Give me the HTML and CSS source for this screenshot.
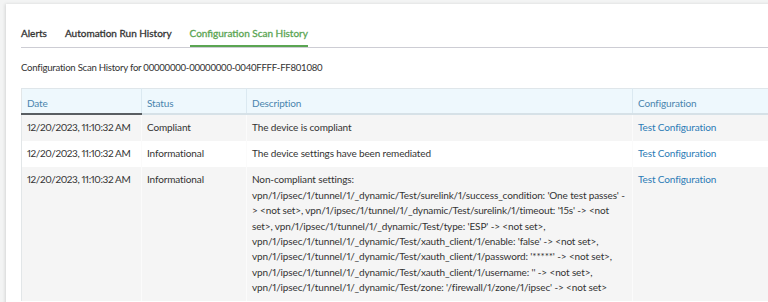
FILE: index.html
```html
<!DOCTYPE html>
<html>
<head>
<meta charset="utf-8">
<link rel="stylesheet" href="styles.css">
</head>
<body>
<div class="page">
  <div class="card">
    <ul class="tabs">
      <li class="tab">Alerts</li>
      <li class="tab">Automation Run History</li>
      <li class="tab active">Configuration Scan History</li>
    </ul>
    <p class="summary">Configuration Scan History for 00000000-00000000-0040FFFF-FF801080</p>
    <table class="grid">
      <colgroup>
        <col class="c-date"><col class="c-status"><col class="c-desc"><col class="c-conf">
      </colgroup>
      <thead>
        <tr>
          <th class="sorted">Date</th>
          <th>Status</th>
          <th>Description</th>
          <th>Configuration</th>
        </tr>
      </thead>
      <tbody>
        <tr class="odd">
          <td class="date">12/20/2023, 11:10:32 AM</td>
          <td>Compliant</td>
          <td>The device is compliant</td>
          <td><a class="link">Test Configuration</a></td>
        </tr>
        <tr>
          <td class="date">12/20/2023, 11:10:32 AM</td>
          <td>Informational</td>
          <td>The device settings have been remediated</td>
          <td><a class="link">Test Configuration</a></td>
        </tr>
        <tr class="odd">
          <td class="date">12/20/2023, 11:10:32 AM</td>
          <td>Informational</td>
          <td class="desc">Non-compliant settings:<br>vpn/1/ipsec/1/tunnel/1/_dynamic/Test/surelink/1/success_condition: 'One test passes' -<br>&gt; &lt;not set&gt;, vpn/1/ipsec/1/tunnel/1/_dynamic/Test/surelink/1/timeout: '15s' -&gt; &lt;not<br>set&gt;, vpn/1/ipsec/1/tunnel/1/_dynamic/Test/type: 'ESP' -&gt; &lt;not set&gt;,<br>vpn/1/ipsec/1/tunnel/1/_dynamic/Test/xauth_client/1/enable: 'false' -&gt; &lt;not set&gt;,<br>vpn/1/ipsec/1/tunnel/1/_dynamic/Test/xauth_client/1/password: '*****' -&gt; &lt;not set&gt;,<br>vpn/1/ipsec/1/tunnel/1/_dynamic/Test/xauth_client/1/username: '' -&gt; &lt;not set&gt;,<br>vpn/1/ipsec/1/tunnel/1/_dynamic/Test/zone: '/firewall/1/zone/1/ipsec' -&gt; &lt;not set&gt;</td>
          <td><a class="link">Test Configuration</a></td>
        </tr>
      </tbody>
    </table>
  </div>
</div>
</body>
</html>
```
FILE: styles.css
```css
html {
  overflow: hidden;
}
body {
  margin: 0;
  background: #f3f4f4;
  font-family: "Lato", "Liberation Sans", sans-serif;
  color: #333;
}
.page {
  width: 800px;
  padding: 4px 0 0 6px;
}
.card {
  background: #fff;
  box-shadow: -1px 0 3px rgba(0, 0, 0, 0.12);
  padding: 18px 0 40px 15px;
}
.tabs {
  list-style: none;
  margin: 0;
  padding: 0;
  display: flex;
  gap: 18px;
  border-bottom: 1px solid #cdcdd4;
}
.tab {
  font-size: 10px;
  font-weight: 400;
  -webkit-text-stroke: 0.3px currentColor;
  line-height: 16px;
  padding: 3px 0 4px;
  border-bottom: 2px solid transparent;
  color: #333;
}
.tab.active {
  color: #5aa552;
  border-bottom-color: #5aa552;
}
.summary {
  margin: 12px 0 12px;
  font-size: 9.6px;
  letter-spacing: -0.25px;
  line-height: 16px;
}
.grid {
  border-collapse: collapse;
  table-layout: fixed;
  width: 780px;
  font-size: 10px;
  letter-spacing: -0.13px;
  font-variant-numeric: proportional-nums;
  border-left: 1px solid #e2e6e8;
}
.c-date { width: 120px; }
.c-status { width: 105px; }
.c-desc { width: 386px; }
.c-conf { width: 169px; }
.grid thead tr {
  background: #eef8fd;
  border-top: 1px solid #dfe6ea;
}
.grid th {
  text-align: left;
  font-weight: 400;
  color: #4a85ad;
  line-height: 16px;
  padding: 6px 5px 2px;
  border-bottom: 2px solid #d6e1e7;
  border-left: 1px solid #dbe9f1;
}
.grid th:first-child {
  border-left: 0;
}
.grid th.sorted {
  border-bottom-color: #595e62;
}
.grid td {
  line-height: 15.4px;
  padding: 5.3px 5px;
  vertical-align: top;
  border-left: 1px solid #fbfbfb;
  white-space: nowrap;
}
.grid td:first-child {
  border-left: 0;
}
.grid td.date {
  letter-spacing: -0.4px;
}
.grid tr.odd {
  background: #f5f5f5;
}
.link {
  color: #2b7bb5;
  text-decoration: none;
}
```
